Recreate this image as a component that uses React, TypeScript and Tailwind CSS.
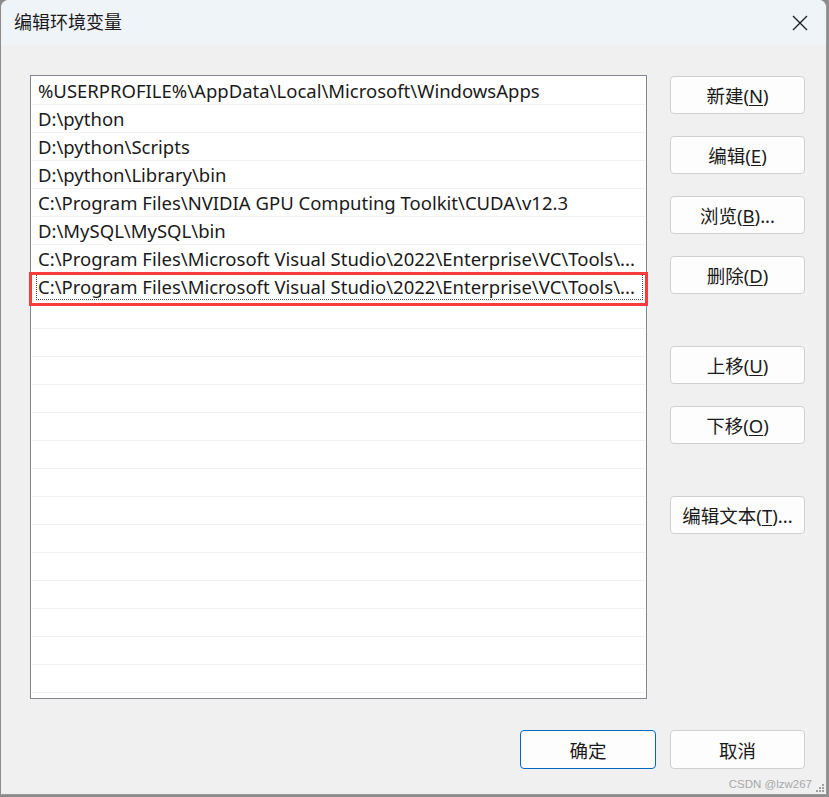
import React from "react";

const rows = [
  "%USERPROFILE%\\AppData\\Local\\Microsoft\\WindowsApps",
  "D:\\python",
  "D:\\python\\Scripts",
  "D:\\python\\Library\\bin",
  "C:\\Program Files\\NVIDIA GPU Computing Toolkit\\CUDA\\v12.3",
  "D:\\MySQL\\MySQL\\bin",
  "C:\\Program Files\\Microsoft Visual Studio\\2022\\Enterprise\\VC\\Tools\\...",
  "C:\\Program Files\\Microsoft Visual Studio\\2022\\Enterprise\\VC\\Tools\\...",
];

const font = { fontFamily: '"Noto Sans", "Noto Sans CJK SC", sans-serif' };

function Btn({ label, k, suffix = "", className = "" }: { label: string; k?: string; suffix?: string; className?: string }) {
  return (
    <div
      className={`h-[38px] w-[135px] rounded-[4px] border border-[#d0d0d0] bg-[#fdfdfd] flex items-center justify-center text-[18.5px] text-[#1a1a1a] ${className}`}
    >
      <span className="mt-[2px]">
        {label}
        {k ? (
          <>
            (<span className="underline underline-offset-2">{k}</span>)
          </>
        ) : null}
        {suffix}
      </span>
    </div>
  );
}

export default function App() {
  const empty = Array.from({ length: 14 });
  return (
    <div className="w-[829px] h-[797px] bg-[#8c8c8c] flex" style={font}>
      <div className="ml-[1px] w-[826px] h-[795px] bg-[#f0f0f0] rounded-tr-[8px] rounded-tl-[8px] overflow-hidden border-r border-b border-[#9a9a9a] flex flex-col relative">
        <div className="h-[45px] bg-[#eff4f9] flex items-center justify-between pl-[13px] pr-[16px] shrink-0">
          <span className="text-[18px] text-[#1a1a1a]">编辑环境变量</span>
          <svg width="18" height="18" viewBox="0 0 18 18" className="mr-[1px]">
            <path d="M2 2 L16 16 M16 2 L2 16" stroke="#1a1a1a" strokeWidth="1.3" />
          </svg>
        </div>
        <div className="flex pl-[29px] pt-[30px]">
          <div className="relative">
            <div className="w-[617px] h-[624px] border border-[#828790] bg-white flex flex-col pt-[1px] overflow-hidden">
              {rows.map((r, i) => (
                <div
                  key={i}
                  className="h-[28px] shrink-0 flex items-center border-b border-[#f0f0f0] mx-[1px]"
                >
                  {i === 7 ? (
                    <div className="ml-[4px] w-[607px] h-[26px] border border-dotted border-[#444] flex items-center overflow-hidden">
                      <span className="text-[18.5px] text-[#1a1a1a] pl-[1px] whitespace-nowrap">{r}</span>
                    </div>
                  ) : (
                    <span className="text-[18.5px] text-[#1a1a1a] pl-[6px] whitespace-nowrap">{r}</span>
                  )}
                </div>
              ))}
              {empty.map((_, i) => (
                <div key={"e" + i} className="h-[28px] shrink-0 border-b border-[#f0f0f0] mx-[1px]" />
              ))}
            </div>
            <div className="absolute left-[-1px] top-[197px] w-[619px] h-[34px] border-[3px] border-[#f63c3c] pointer-events-none" />
          </div>
          <div className="ml-[23px] flex flex-col">
            <Btn label="新建" k="N" className="mt-[1px]" />
            <Btn label="编辑" k="E" className="mt-[22px]" />
            <Btn label="浏览" k="B" suffix="..." className="mt-[22px]" />
            <Btn label="删除" k="D" className="mt-[22px]" />
            <Btn label="上移" k="U" className="mt-[52px]" />
            <Btn label="下移" k="O" className="mt-[22px]" />
            <Btn label="编辑文本" k="T" suffix="..." className="mt-[52px]" />
          </div>
        </div>
        <div className="flex justify-end pr-[21px] mt-[31px] gap-[14px]">
          <div className="h-[39px] w-[136px] rounded-[4px] border border-[#0067c0] bg-[#fdfdfd] flex items-center justify-center text-[18.5px] text-[#1a1a1a]">
            <span className="mt-[2px]">确定</span>
          </div>
          <Btn label="取消" className="h-[39px]" />
        </div>
        <div className="absolute right-[14px] bottom-[4px] flex items-end gap-[3px]">
          <span className="text-[11.5px] text-[#a8a8a8] leading-none" style={{ fontFamily: '"Liberation Sans", sans-serif' }}>
            CSDN @lzw267
          </span>
        </div>
        <svg width="10" height="10" viewBox="0 0 10 10" className="absolute right-[1px] bottom-[1px]">
          <rect x="7" y="1" width="2" height="2" fill="#a0a0a0" />
          <rect x="4" y="4" width="2" height="2" fill="#a0a0a0" />
          <rect x="7" y="4" width="2" height="2" fill="#a0a0a0" />
          <rect x="1" y="7" width="2" height="2" fill="#a0a0a0" />
          <rect x="4" y="7" width="2" height="2" fill="#a0a0a0" />
          <rect x="7" y="7" width="2" height="2" fill="#a0a0a0" />
        </svg>
      </div>
    </div>
  );
}
